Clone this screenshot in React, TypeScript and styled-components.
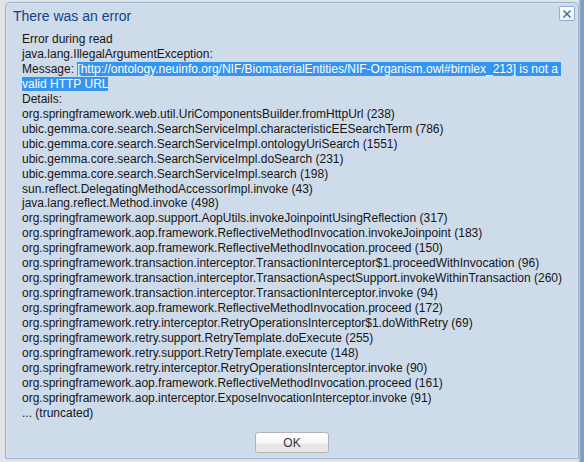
import React from 'react'
import styled, { createGlobalStyle } from 'styled-components'

const GlobalStyle = createGlobalStyle`
  html, body {
    margin: 0;
    padding: 0;
    background: #dfe0e2;
    overflow: hidden;
  }
  body {
    font-family: "Liberation Sans", Arial, sans-serif;
  }
`

const Page = styled.div`
  width: 584px;
  height: 462px;
  display: flex;
  background: linear-gradient(90deg, #e2e3e5 0, #e2e3e5 578px, #7f9cc4 581px, #7f9cc4 100%);
`

const Window = styled.div`
  margin: 2px 0 0 5px;
  width: 574px;
  height: 457px;
  box-sizing: border-box;
  border: 1px solid #99b0cf;
  border-radius: 5px 5px 2px 2px;
  background: #cedbea;
  box-shadow: inset 0 0 0 1px #dbe5f1;
  display: flex;
  flex-direction: column;
`

const Header = styled.div`
  height: 26px;
  display: flex;
  align-items: center;
  justify-content: space-between;
  padding: 0 3px 0 7px;
`

const Title = styled.h1`
  margin: 0;
  font-size: 14px;
  font-weight: normal;
  color: #15428b;
  font-family: "Liberation Sans", Arial, sans-serif;
`

const CloseButton = styled.button`
  width: 16px;
  height: 15px;
  padding: 0;
  margin-top: -5px;
  border: 1px solid #8fb0da;
  border-radius: 2px;
  background: linear-gradient(#ffffff, #e8f0fa);
  display: flex;
  align-items: center;
  justify-content: center;
  cursor: pointer;
`

const Body = styled.div`
  flex: 1;
  padding: 3px 10px 0 16px;
  font-size: 12px;
  line-height: 14.95px;
  color: #161616;
`

const Line = styled.div`
  white-space: nowrap;
`

const Selected = styled.span`
  background: #3394f2;
  color: #ffffff;
`

const Footer = styled.div`
  display: flex;
  justify-content: center;
  padding-bottom: 5px;
`

const OkButton = styled.button`
  width: 74px;
  height: 21px;
  border: 1px solid #b3b3b3;
  border-radius: 3px;
  background: linear-gradient(#ffffff 0, #f6f6f6 55%, #e4e4e4 56%, #e9e9e9 100%);
  font-family: "Liberation Sans", Arial, sans-serif;
  font-size: 12px;
  color: #333;
  cursor: pointer;
`

const stack = [
  'org.springframework.web.util.UriComponentsBuilder.fromHttpUrl (238)',
  'ubic.gemma.core.search.SearchServiceImpl.characteristicEESearchTerm (786)',
  'ubic.gemma.core.search.SearchServiceImpl.ontologyUriSearch (1551)',
  'ubic.gemma.core.search.SearchServiceImpl.doSearch (231)',
  'ubic.gemma.core.search.SearchServiceImpl.search (198)',
  'sun.reflect.DelegatingMethodAccessorImpl.invoke (43)',
  'java.lang.reflect.Method.invoke (498)',
  'org.springframework.aop.support.AopUtils.invokeJoinpointUsingReflection (317)',
  'org.springframework.aop.framework.ReflectiveMethodInvocation.invokeJoinpoint (183)',
  'org.springframework.aop.framework.ReflectiveMethodInvocation.proceed (150)',
  'org.springframework.transaction.interceptor.TransactionInterceptor$1.proceedWithInvocation (96)',
  'org.springframework.transaction.interceptor.TransactionAspectSupport.invokeWithinTransaction (260)',
  'org.springframework.transaction.interceptor.TransactionInterceptor.invoke (94)',
  'org.springframework.aop.framework.ReflectiveMethodInvocation.proceed (172)',
  'org.springframework.retry.interceptor.RetryOperationsInterceptor$1.doWithRetry (69)',
  'org.springframework.retry.support.RetryTemplate.doExecute (255)',
  'org.springframework.retry.support.RetryTemplate.execute (148)',
  'org.springframework.retry.interceptor.RetryOperationsInterceptor.invoke (90)',
  'org.springframework.aop.framework.ReflectiveMethodInvocation.proceed (161)',
  'org.springframework.aop.interceptor.ExposeInvocationInterceptor.invoke (91)',
  '... (truncated)',
]

const App: React.FC = () => {
  return (
    <>
      <GlobalStyle />
      <Page>
        <Window>
          <Header>
            <Title>There was an error</Title>
            <CloseButton aria-label="Close">
              <svg width="10" height="10" viewBox="0 0 10 10">
                <path d="M1.5 1.5 L8.5 8.5 M8.5 1.5 L1.5 8.5" stroke="#3f5f96" strokeWidth="1.4" />
              </svg>
            </CloseButton>
          </Header>
          <Body>
            <Line>Error during read</Line>
            <Line>java.lang.IllegalArgumentException:</Line>
            <Line>
              Message: <Selected>[http://ontology.neuinfo.org/NIF/BiomaterialEntities/NIF-Organism.owl#birnlex_213] is not a&nbsp;</Selected>
            </Line>
            <Line>
              <Selected>valid HTTP URL</Selected>
            </Line>
            <Line>Details:</Line>
            {stack.map(line => (
              <Line key={line}>{line}</Line>
            ))}
          </Body>
          <Footer>
            <OkButton>OK</OkButton>
          </Footer>
        </Window>
      </Page>
    </>
  )
}

export default App
